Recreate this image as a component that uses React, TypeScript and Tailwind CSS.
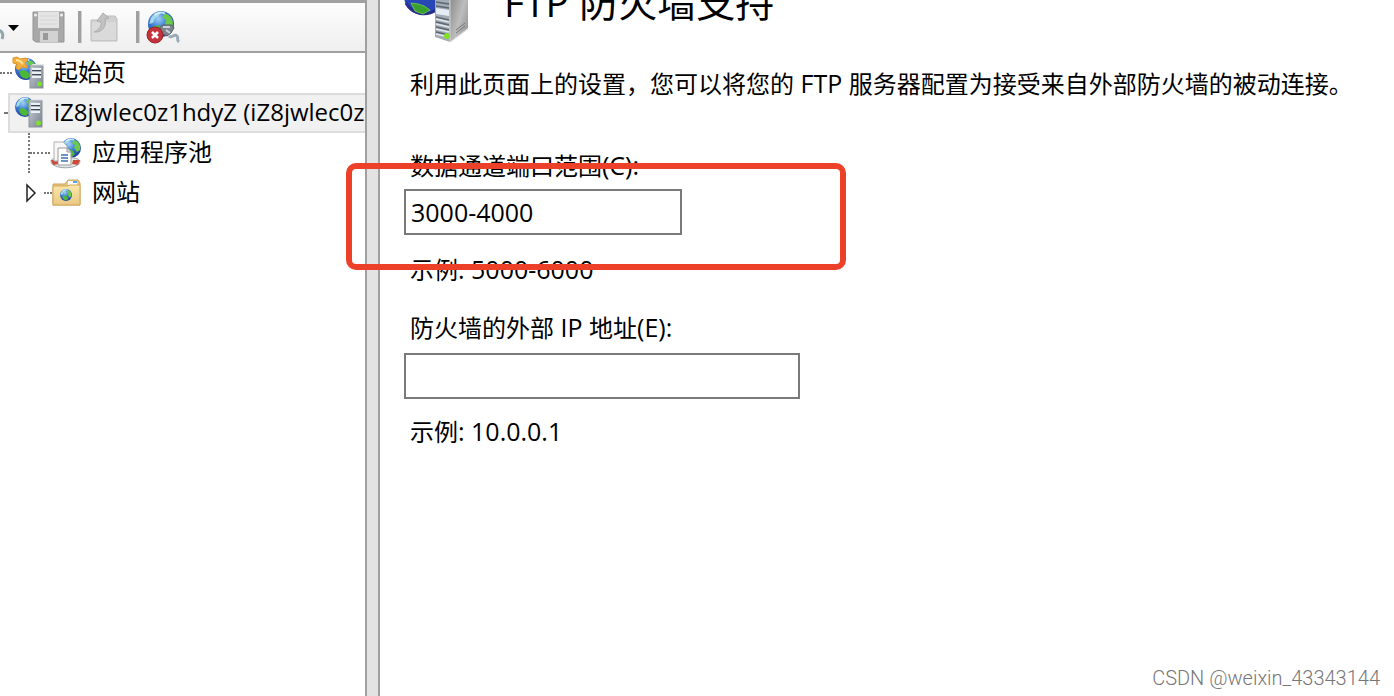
import type { ReactNode } from "react";

function Defs() {
  return (
    <svg width="0" height="0" className="absolute" aria-hidden="true">
      <defs>
        <radialGradient id="ocean" cx="0.4" cy="0.3" r="0.75">
          <stop offset="0" stopColor="#9fd0f8" />
          <stop offset="0.45" stopColor="#3a7dd2" />
          <stop offset="1" stopColor="#23359a" />
        </radialGradient>
        <linearGradient id="steel" x1="0" y1="0" x2="1" y2="1">
          <stop offset="0" stopColor="#c9d0d8" />
          <stop offset="1" stopColor="#77818c" />
        </linearGradient>
        <linearGradient id="side" x1="0" y1="0" x2="1" y2="1">
          <stop offset="0" stopColor="#777" />
          <stop offset="0.6" stopColor="#bdbdbd" />
          <stop offset="1" stopColor="#8b8b8b" />
        </linearGradient>
        <linearGradient id="folder" x1="0" y1="0" x2="0" y2="1">
          <stop offset="0" stopColor="#fbe6ab" />
          <stop offset="1" stopColor="#e9c982" />
        </linearGradient>
      </defs>
    </svg>
  );
}

function Globe({ cx, cy, r }: { cx: number; cy: number; r: number }) {
  return (
    <g transform={`translate(${cx} ${cy}) scale(${r / 10})`}>
      <circle r="10" fill="url(#ocean)" />
      <path d="M3-8C8-7 10-2 9 2L6 4 3 0 4-3 1-5Z" fill="#6cc94a" />
      <path d="M-8-4C-6-8-2-9 0-9L-2-6-5-4-6-1-9 0Z" fill="#a5d9e8" />
      <path d="M-6 2L-2 1 2 3 4 6 1 9-3 8-5 6Z" fill="#4cb83a" />
      <path d="M-5-7Q-1-10 3-8" stroke="#e2f5ff" strokeWidth="1.5" fill="none" opacity="0.8" />
    </g>
  );
}

function Tower({ x, y, h }: { x: number; y: number; h: number }) {
  return (
    <g transform={`translate(${x} ${y})`}>
      <path d={`M0 2L3 0H14L13 2V${h}H0Z`} fill="#e3e7eb" />
      <rect x="0" y="2" width="13" height={h - 2} fill="url(#steel)" stroke="#8b949e" />
      <path d="M2 5H11M2 9H11M2 13H11" stroke="#eef1f4" strokeWidth="2" />
      <path d="M2 6.5H11M2 10.5H11" stroke="#3f4953" />
      <circle cx="9.5" cy={h - 4} r="2.5" fill="#7be22c" />
    </g>
  );
}

function StartIcon() {
  return (
    <svg width="34" height="34" viewBox="0 0 34 34" aria-hidden="true">
      <Globe cx={14} cy={13} r={11} />
      <path d="M1 2L5 1 8 3 14 2 16 4 13 7 16 12 10 11 7 14 4 12 5 8 1 7Z" fill="#f3ae3a" stroke="#e0952a" />
      <path d="M4 4L8 5 11 8" stroke="#ffe39a" strokeWidth="2" fill="none" />
      <Tower x={18} y={8} h={24} />
    </svg>
  );
}

function ServerIcon() {
  return (
    <svg width="34" height="34" viewBox="0 0 34 34" aria-hidden="true">
      <Globe cx={11} cy={11} r={10} />
      <Tower x={15} y={3} h={28} />
    </svg>
  );
}

function PoolsIcon() {
  return (
    <svg width="32" height="32" viewBox="0 0 32 32" aria-hidden="true">
      <Globe cx={21} cy={11} r={10} />
      <path d="M1 24C1 19 29 19 30 24C30 33 1 33 1 24Z" fill="#e4e6e8" stroke="#9ba0a5" />
      <path d="M1 23L8 23 9 27 3 28ZM30 23L23 23 22 27 28 28Z" fill="#cb4a38" />
      <path d="M4 5H13L17 9V24H4Z" fill="#f7f7f7" stroke="#b2b2b2" />
      <path d="M8 11H17L21 15V28H8Z" fill="#fff" stroke="#9a9a9a" />
      <path d="M11 18H18M11 21H18M11 24H18" stroke="#3f6eb6" strokeWidth="1.5" />
      <path d="M17 11V15H21" fill="#ddd" stroke="#999" />
    </svg>
  );
}

function SitesIcon() {
  return (
    <svg width="32" height="32" viewBox="0 0 32 32" aria-hidden="true">
      <path d="M1 7H13L16 3H26L28 6V28H1Z" fill="#e9c87e" stroke="#c9a55c" />
      <rect x="16" y="4" width="9" height="4" fill="#fff" />
      <rect x="21" y="4" width="4" height="2" fill="#61a1e5" />
      <path d="M1 9H15L18 8H28V28H1Z" fill="url(#folder)" stroke="#d1a759" />
      <Globe cx={14} cy={18} r={6} />
    </svg>
  );
}

function SaveIcon() {
  return (
    <svg width="34" height="34" viewBox="0 0 34 34" aria-hidden="true">
      <path d="M1 2H32V32H4L1 30Z" fill="#a8a8a8" stroke="#959595" />
      <rect x="6" y="2" width="21" height="16" fill="#e4e4e4" />
      <path d="M8 6H25M8 10H25M8 14H25" stroke="#d6d6d6" />
      <rect x="8" y="21" width="18" height="11" fill="#d2d2d2" />
      <rect x="11" y="23" width="5" height="7" fill="#999" />
      <circle cx="3.5" cy="5" r="1.5" fill="#f3f3f3" />
      <circle cx="29.5" cy="5" r="1.5" fill="#f3f3f3" />
    </svg>
  );
}

function UpIcon() {
  return (
    <svg width="32" height="32" viewBox="0 0 32 32" aria-hidden="true">
      <path d="M1 9H13L16 5H25L27 8V30H1Z" fill="#d0d0d0" stroke="#bdbdbd" />
      <path d="M2 11H26V29H2Z" fill="#dadada" />
      <path d="M4 21C9 19 12 15 11 11L7 10 13 2 19 7 15 8C17 16 11 22 4 21Z" fill="#c2c2c2" stroke="#adadad" />
    </svg>
  );
}

function DisconnectIcon() {
  return (
    <svg width="36" height="36" viewBox="0 0 36 36" aria-hidden="true">
      <Globe cx={15} cy={15} r={13} />
      <path d="M14 18L17 16 26 16 28 19 25 24 21 27 15 24Z" fill="#7c858d" stroke="#59626a" />
      <path d="M17 18L24 18M20 21L24 24" stroke="#cbd3da" strokeWidth="2" />
      <path d="M23 27C26 30 28 24 31 27 33 29 30 31 33 33" stroke="#9aabb8" strokeWidth="3" fill="none" />
      <circle cx="9" cy="26" r="8" fill="#c4333b" stroke="#9b262c" />
      <path d="M6 23L12 29M12 23L6 29" stroke="#fff" strokeWidth="2.5" />
    </svg>
  );
}

function FirewallIcon() {
  return (
    <svg width="66" height="66" viewBox="0 0 66 66" aria-hidden="true">
      <circle cx="19" cy="20" r="19" fill="#2747b4" />
      <path d="M2 27C8 38 22 41 32 34" stroke="#2a2f8c" strokeWidth="3" fill="none" />
      <path d="M7 27L14 28 20 30 26 34 19 38 11 35Z" fill="#37a02f" stroke="#6cc04e" />
      <path d="M31 0L46 2V66L31 61Z" fill="#a3abb5" />
      <path d="M32 32L45 34V40L32 38Z" fill="#e4edf5" />
      <path
        d="M32 26L45 28M32 30L45 32M32 41L45 44M32 46L45 49M32 51L45 54M32 56L45 59"
        stroke="#5d6773"
        strokeWidth="1.5"
      />
      <path d="M32 43L45 46M32 48L45 51M32 53L45 56M32 58L45 61" stroke="#e2e6ea" strokeWidth="1.5" />
      <path d="M46 2L64 0V52L46 66Z" fill="url(#side)" />
      <path d="M46 2V66L64 53" stroke="#d5d5d5" fill="none" />
      <path d="M52 57L61 50M52 54L61 47" stroke="#777" />
      <circle cx="43" cy="60" r="3" fill="#7fe026" />
    </svg>
  );
}

function Dots({ className }: { className: string }) {
  return <span aria-hidden="true" className={`shrink-0 border-dotted border-[#777] ${className}`} />;
}

function Separator() {
  return <span aria-hidden="true" className="h-8 w-1 shrink-0 border-r border-[#d0d0d0] bg-[#a0a0a0]" />;
}

function Latin({ children }: { children: ReactNode }) {
  return <span className="text-[25px] leading-none">{children}</span>;
}

function ToolButton({ label, children }: { label: string; children: ReactNode }) {
  return (
    <button type="button" aria-label={label} className="shrink-0">
      {children}
    </button>
  );
}

function Sidebar() {
  return (
    <aside className="flex w-[365px] shrink-0 flex-col overflow-hidden">
      <div className="flex h-[53px] shrink-0 items-center border-t-3 border-b-2 border-[#a0a0a0] bg-linear-to-b from-[#fdfdfd] to-[#efefef]">
        <svg width="5" height="16" viewBox="0 0 5 16" className="mt-4 shrink-0" aria-hidden="true">
          <path d="M-2 3C2 4 4 7 2 12" stroke="#8fa6ac" strokeWidth="3" fill="none" />
        </svg>
        <ToolButton label="连接">
          <svg width="16" height="12" viewBox="0 0 16 12" aria-hidden="true">
            <path d="M3 4H14L8.5 10Z" fill="#000" />
          </svg>
        </ToolButton>
        <div className="flex items-center pl-[11px]">
          <ToolButton label="保存">
            <SaveIcon />
          </ToolButton>
          <div className="flex items-center gap-2 pl-3">
            <Separator />
            <ToolButton label="向上">
              <UpIcon />
            </ToolButton>
          </div>
          <div className="flex items-center gap-1.5 pl-3.5">
            <Separator />
            <ToolButton label="断开连接">
              <DisconnectIcon />
            </ToolButton>
          </div>
        </div>
      </div>
      <ul className="text-2xl whitespace-nowrap">
        <li className="flex h-10 items-center">
          <Dots className="w-3 border-t-2" />
          <StartIcon />
          <span className="pb-0.5 pl-2">起始页</span>
        </li>
        <li>
          <div className="flex h-10 items-center">
            <Dots className="ml-1 w-1 border-t-2" />
            <div className="flex h-10 flex-1 items-center border-y-2 border-l-2 border-[#dcdcdc] bg-[#f1f1f1] pl-1">
              <ServerIcon />
              <span className="pb-0.5 pl-1.5">iZ8jwlec0z1hdyZ (iZ8jwlec0z1hdyZ</span>
            </div>
          </div>
          <ul>
            <li className="flex h-10 items-center pl-7">
              <Dots className="h-10 border-l-2" />
              <Dots className="w-5 border-t-2" />
              <PoolsIcon />
              <span className="pb-0.5 pl-2.5">应用程序池</span>
            </li>
            <li className="flex h-10 items-center pl-6">
              <button type="button" aria-label="展开网站" className="shrink-0">
                <svg width="14" height="20" viewBox="0 0 14 20" aria-hidden="true">
                  <path d="M3 2V18L11 10Z" fill="#fff" stroke="#222" strokeWidth="1.5" />
                </svg>
              </button>
              <span className="flex pl-1.5">
                <Dots className="w-2 border-t-2" />
              </span>
              <SitesIcon />
              <span className="pb-0.5 pl-2">网站</span>
            </li>
          </ul>
        </li>
      </ul>
    </aside>
  );
}

export default function App() {
  return (
    <div className="relative flex min-h-screen overflow-hidden bg-white font-['Open_Sans','Noto_Sans_CJK_SC',sans-serif] text-black">
      <Defs />
      <Sidebar />
      <div className="w-[15px] shrink-0 border-x-2 border-[#a0a0a0] bg-[#e3e3e3]" />
      <main className="min-w-0 flex-1 pl-6 text-2xl leading-8">
        <header className="flex h-[42px] items-end gap-[34px] overflow-hidden">
          <FirewallIcon />
          <h1 className="pb-4 text-[39px] leading-12 whitespace-nowrap">FTP 防火墙支持</h1>
        </header>
        <p className="pt-[26px] pl-1.5 whitespace-nowrap">
          利用此页面上的设置，您可以将您的<Latin> FTP </Latin>服务器配置为接受来自外部防火墙的被动连接。
        </p>
        <form>
          <div className="relative mt-[50px]">
            <label htmlFor="ports" className="block pl-1.5">
              数据通道端口范围<Latin>(C):</Latin>
            </label>
            <input
              id="ports"
              type="text"
              defaultValue="3000-4000"
              className="mt-[7px] block h-[46px] w-[278px] border-2 border-[#7a7a7a] bg-white px-[5px] text-[25px] outline-none"
            />
            <p className="mt-[19px] pl-1.5">
              示例<Latin>: 5000-6000</Latin>
            </p>
            <div className="pointer-events-none absolute top-[13px] -left-[58px] h-[107px] w-[500px] rounded-[10px] border-6 border-[#ec4128]" />
          </div>
          <label htmlFor="address" className="mt-[26px] block pl-1.5">
            防火墙的外部<Latin> IP </Latin>地址<Latin>(E):</Latin>
          </label>
          <input
            id="address"
            type="text"
            className="mt-[9px] block h-[46px] w-[396px] border-2 border-[#7a7a7a] bg-white px-[5px] text-[25px] outline-none"
          />
          <p className="mt-[17px] pl-1.5">
            示例<Latin>: 10.0.0.1</Latin>
          </p>
        </form>
      </main>
      <div className="absolute right-3.5 bottom-1.5 font-[Roboto,sans-serif] text-xl leading-6 font-light text-[#777]">
        CSDN @weixin_43343144
      </div>
    </div>
  );
}
